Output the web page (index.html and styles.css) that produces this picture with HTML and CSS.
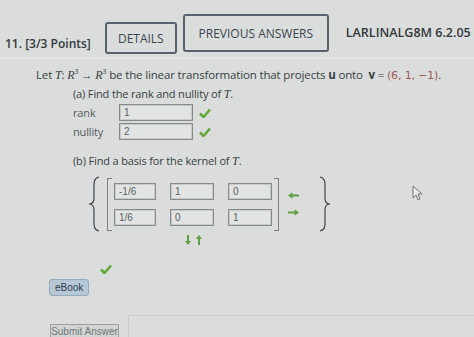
FILE: index.html
```html
<!DOCTYPE html>
<html lang="en">
<head>
    <meta charset="UTF-8">
    <meta name="viewport" content="width=device-width, initial-scale=1.0">
    <title>Question 11</title>
    <link rel="stylesheet" href="styles.css">
</head>
<body>

    <header class="q-header">
        <span class="points">11. [3/3 Points]</span>
        <span class="btn-outline btn-details">DETAILS</span>
        <span class="btn-outline btn-prev">PREVIOUS ANSWERS</span>
        <span class="course-id">LARLINALG8M 6.2.05</span>
    </header>

    <main class="question">
        <p class="intro">Let <i>T</i>: <i>R</i><sup>3</sup> &rarr; <i>R</i><sup>3</sup> be the linear transformation that projects <b>u</b> onto&nbsp; <b>v</b> = <span class="vec">(6, 1, &minus;1)</span>.</p>

        <div class="part">
            <p class="part-title">(a) Find the rank and nullity of <i>T</i>.</p>
            <div class="answer-row">
                <span class="label">rank</span>
                <span class="field field-wide">1</span>
                <svg class="check" viewBox="0 0 12 10"><path d="M1 5.5 L4.5 9 L11 1.5" /></svg>
            </div>
            <div class="answer-row">
                <span class="label">nullity</span>
                <span class="field field-wide">2</span>
                <svg class="check" viewBox="0 0 12 10"><path d="M1 5.5 L4.5 9 L11 1.5" /></svg>
            </div>

            <p class="part-title part-b">(b) Find a basis for the kernel of <i>T</i>.</p>
            <div class="matrix-row">
                <svg class="brace" viewBox="0 0 12 56"><path d="M11 1 C5 2 6 8 6 16 L6 22 C6 26 4 28 1 28 C4 28 6 30 6 34 L6 40 C6 48 5 54 11 55" /></svg>
                <div class="matrix">
                    <span class="field">-1/6</span>
                    <span class="field">1</span>
                    <span class="field">0</span>
                    <span class="field">1/6</span>
                    <span class="field">0</span>
                    <span class="field">1</span>
                </div>
                <div class="swap">
                    <svg viewBox="0 0 10 6"><path d="M0 3 L4 0 L4 2 L10 2 L10 4 L4 4 L4 6 Z" /></svg>
                    <svg viewBox="0 0 10 6"><path d="M10 3 L6 0 L6 2 L0 2 L0 4 L6 4 L6 6 Z" /></svg>
                </div>
                <svg class="brace brace-right" viewBox="0 0 12 56"><path d="M11 1 C5 2 6 8 6 16 L6 22 C6 26 4 28 1 28 C4 28 6 30 6 34 L6 40 C6 48 5 54 11 55" /></svg>
            </div>
            <div class="updown">
                <svg viewBox="0 0 6 10"><path d="M3 10 L0 6 L2 6 L2 0 L4 0 L4 6 L6 6 Z" /></svg>
                <svg viewBox="0 0 6 10"><path d="M3 0 L0 4 L2 4 L2 10 L4 10 L4 4 L6 4 Z" /></svg>
            </div>
            <svg class="check check-b" viewBox="0 0 12 10"><path d="M1 5.5 L4.5 9 L11 1.5" /></svg>
        </div>

        <span class="ebook">eBook</span>

        <div class="submit-row">
            <span class="submit">Submit Answer</span>
            <div class="note-box"></div>
        </div>
    </main>

    <!-- mouse pointer -->
    <svg class="cursor" viewBox="0 0 10 16"><path d="M1 1 L1 13 L4 10 L6 15 L8 14 L6 9 L10 9 Z" /></svg>

</body>
</html>
```

FILE: styles.css
```css
body {
    margin: 0;
    padding: 0;
    width: 474px;
    height: 337px;
    overflow: hidden;
    background: #dadddb;
    color: #383e43;
    font-family: "Open Sans", "Liberation Sans", sans-serif;
    position: relative;
}

.q-header {
    display: flex;
    align-items: flex-start;
    height: 58px;
    padding-left: 5px;
    border-bottom: 1px solid #e6e8e6;
    white-space: nowrap;
}

.points {
    margin-top: 35px;
    font-size: 12px;
    font-weight: 600;
    color: #33383d;
}

.btn-outline {
    display: flex;
    align-items: center;
    justify-content: center;
    box-sizing: border-box;
    border: 2px solid #56616b;
    border-radius: 3px;
    font-size: 12px;
    color: #3b4650;
}

.btn-details {
    margin: 22px 0 0 14px;
    width: 72px;
    height: 32px;
}

.btn-prev {
    margin: 14px 0 0 6px;
    width: 146px;
    height: 38px;
}

.course-id {
    margin: 24px 0 0 17px;
    font-size: 12.5px;
    font-weight: 600;
    color: #33383d;
}

.question {
    padding-left: 36px;
    font-size: 11px;
    letter-spacing: -0.15px;
}

p {
    margin: 0;
}

.intro {
    margin-top: 8px;
    line-height: 16px;
    white-space: nowrap;
    font-size: 11.5px;
}

.intro i, .part-title i {
    font-family: "Liberation Serif", serif;
    font-size: 12px;
}

.intro sup {
    font-size: 7px;
    line-height: 0;
}

.vec {
    color: #9a5a50;
    font-family: "DejaVu Sans", sans-serif;
    font-size: 11px;
}

.part {
    margin-left: 37px;
}

.part-title {
    margin-top: 2px;
    line-height: 16px;
}

.part-b {
    margin-top: 13px;
}

.answer-row {
    display: flex;
    align-items: center;
    height: 17px;
    margin-top: 2px;
}

.label {
    width: 46px;
    color: #555b60;
}

.field {
    box-sizing: border-box;
    display: flex;
    align-items: center;
    height: 17px;
    padding-left: 4px;
    border: 1px solid #858b8b;
    box-shadow: inset 0 0 0 1px #c7cbc8;
    background: #e1e4e2;
    font-family: "Liberation Sans", sans-serif;
    font-size: 10px;
    letter-spacing: 0;
    color: #5a6064;
}

.field-wide {
    width: 74px;
}

.check {
    width: 12px;
    height: 10px;
    margin-left: 6px;
    fill: none;
    stroke: #62a83a;
    stroke-width: 2.6;
}

.matrix-row {
    display: flex;
    align-items: center;
    margin: 7px 0 0 15px;
    height: 56px;
}

.brace {
    width: 12px;
    height: 56px;
    fill: none;
    stroke: #3d4348;
    stroke-width: 1.2;
}

.brace-right {
    transform: scaleX(-1);
    margin-left: 20px;
}

.matrix {
    display: grid;
    grid-template-columns: 42px 44px 44px;
    column-gap: 14px;
    row-gap: 9px;
    margin-left: 7px;
    padding: 5px 6px;
    border-left: 1px solid #7d8384;
    border-right: 1px solid #7d8384;
    position: relative;
}

.matrix::before, .matrix::after {
    content: "";
    position: absolute;
    top: 0;
    bottom: 0;
    width: 4px;
    border-top: 1px solid #7d8384;
    border-bottom: 1px solid #7d8384;
}

.matrix::before {
    left: 0;
}

.matrix::after {
    right: 0;
}

.swap {
    display: flex;
    flex-direction: column;
    gap: 10px;
    margin-left: 9px;
}

.swap svg {
    width: 11px;
    height: 7px;
    fill: #5e9e3e;
}

.updown {
    display: flex;
    gap: 5px;
    margin: 3px 0 0 112px;
    height: 11px;
}

.updown svg {
    width: 6px;
    height: 10px;
    fill: #5e9e3e;
}

.check-b {
    display: block;
    margin: 18px 0 0 27px;
}

.ebook {
    display: inline-block;
    margin: 5px 0 0 13px;
    padding: 1px 5px;
    border: 1px solid #94a9bb;
    border-radius: 3px;
    background: #b6c7d5;
    font-family: "Liberation Sans", sans-serif;
    font-size: 10px;
    letter-spacing: 0;
    line-height: 13px;
    color: #2f3f52;
}

.submit-row {
    display: flex;
    align-items: flex-end;
    margin-top: 19px;
    margin-left: 14px;
}

.submit {
    box-sizing: border-box;
    width: 69px;
    height: 16px;
    border: 1px solid #9a9e9d;
    background: #d2d5d3;
    font-family: "Liberation Sans", sans-serif;
    font-size: 10px;
    letter-spacing: 0;
    line-height: 14px;
    text-align: center;
    color: #6f7576;
}

.note-box {
    flex: 1;
    height: 24px;
    margin-left: 9px;
    margin-bottom: -1px;
    border: 1px solid #c9ccca;
    border-right: none;
}

.cursor {
    position: absolute;
    left: 412px;
    top: 185px;
    width: 10px;
    height: 16px;
    fill: #e9ebea;
    stroke: #6f7474;
    stroke-width: 1;
}
```
